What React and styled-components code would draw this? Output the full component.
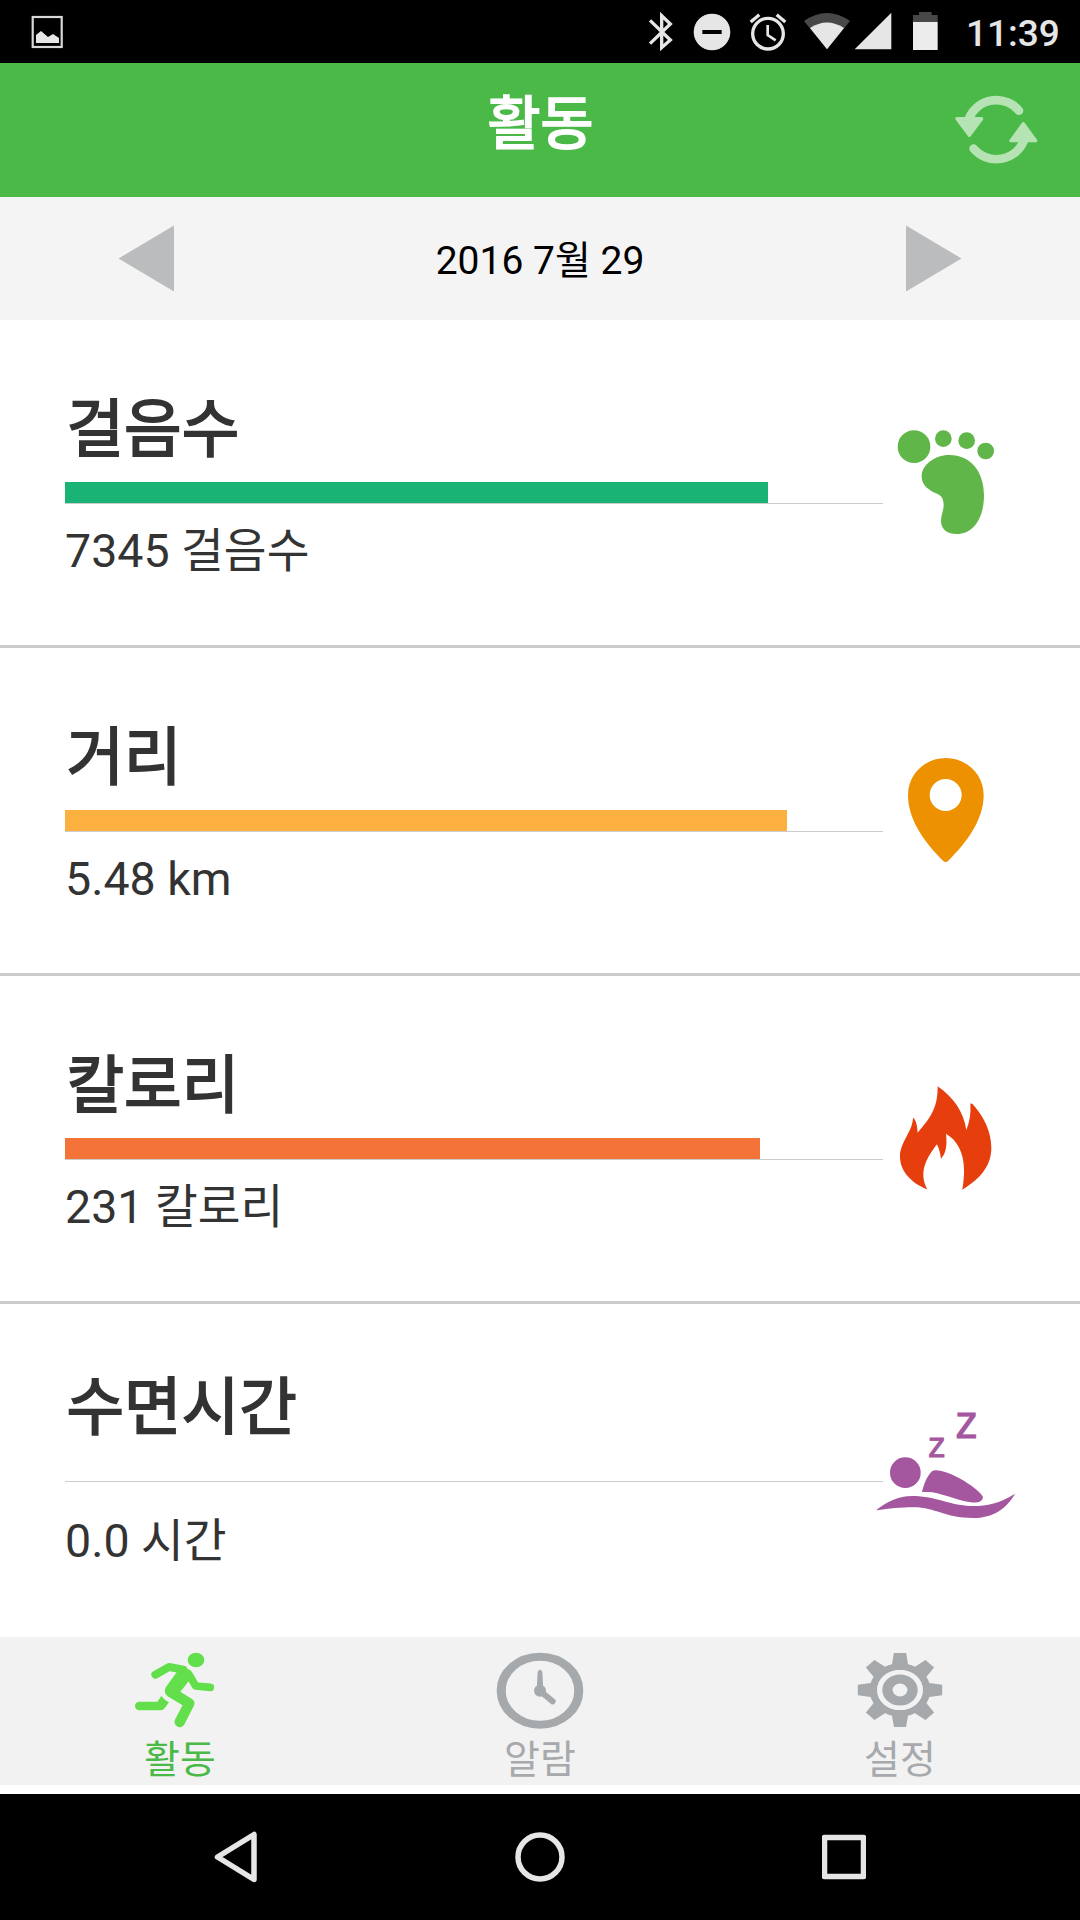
import styled, { createGlobalStyle } from "styled-components";

const activities = [
    { name: "걸음수", value: "7345 걸음수", percent: 85.94, color: "#19b475", Icon: FootIcon },
    { name: "거리", value: "5.48 km", percent: 88.26, color: "#fbb040", Icon: PinIcon },
    { name: "칼로리", value: "231 칼로리", percent: 84.96, color: "#f37338", Icon: FireIcon },
    { name: "수면시간", value: "0.0 시간", percent: 0, color: "#a4579f", Icon: SleepIcon },
];

const tabs = [
    { name: "활동", Icon: RunIcon, active: true },
    { name: "알람", Icon: ClockIcon },
    { name: "설정", Icon: GearIcon },
];

function FootIcon() {
    return (
        <svg viewBox="48 690 420 312" fill="#60b648">
            <circle cx="162" cy="740" r="49" />
            <circle cx="250" cy="716" r="25" />
            <circle cx="320" cy="722" r="25" />
            <circle cx="377" cy="753" r="25" />
            <path d="M268 765C332 765 372 815 372 885C372 955 340 1002 291 1002C262 1002 243 988 243 962C243 945 251 932 251 915C251 900 247 890 237 884C215 874 185 862 185 828C185 797 222 765 268 765Z" />
        </svg>
    );
}

function PinIcon() {
    return (
        <svg viewBox="48 114 420 312" fill="#ee9100">
            <path
                fillRule="evenodd"
                d="M257 114C320 114 371 163 371 225C371 300 320 367 265 422Q257 430 249 422C194 367 144 300 144 225C144 163 195 114 257 114ZM257 177A48 48 0 1 0 257 273A48 48 0 1 0 257 177Z"
            />
        </svg>
    );
}

function FireIcon() {
    return (
        <svg viewBox="48 78 420 312" fill="#e63e0d">
            <path d="M233 79C280 112 311 155 319 210C329 185 333 160 331 131C337 129 341 136 346 142C372 174 394 215 394 264C394 325 350 363 307 389C314 350 325 260 258 221C262 255 258 280 243 296C241 280 237 266 231 253C203 290 173 335 202 388C165 374 120 340 120 290C120 245 158 215 159 173C169 180 172 198 173 218C210 175 234 145 233 79Z" />
        </svg>
    );
}

function SleepIcon() {
    return (
        <svg viewBox="108 72 420 312" fill="#a4579f">
            <circle cx="196" cy="248" r="46" />
            <path d="M246 306C252 280 262 258 276 244C300 228 400 280 429 320C428 335 412 340 392 337C345 330 300 306 262 306Z" />
            <path d="M108 361C140 335 175 318 217 318C290 318 330 348 400 348C440 348 480 340 525 311C500 355 460 384 400 384C310 384 290 352 220 352C180 352 150 356 108 361Z" />
            <SleepLetter x="264" y="202" fontSize="106">z</SleepLetter>
            <SleepLetter x="346" y="145" fontSize="136">z</SleepLetter>
        </svg>
    );
}

function RunIcon() {
    return (
        <svg viewBox="102 66 276 234" fill="#64df4c">
            <ellipse cx="288" cy="90" rx="25" ry="22" />
            <g fill="none" stroke="#64df4c" strokeLinecap="round" strokeLinejoin="round">
                <path d="M166 134L207 111L250 119" strokeWidth="24" />
                <path d="M266 132L287 168L331 172" strokeWidth="23" />
                <path d="M212 186L268 220L239 276" strokeWidth="31" />
            </g>
            <path d="M232 124C260 100 285 128 275 144L266 154L240 187L210 200C192 192 192 182 198 171Z" />
            <path d="M118 215H172L184 198Q193 210 207 217L195 233Q190 241 181 241H118A13 13 0 0 1 118 215Z" />
        </svg>
    );
}

function ClockIcon() {
    return (
        <svg viewBox="102 66 276 234">
            <g transform="translate(240 182) scale(1.14 1)" fill="none" stroke="#a5a9ac" strokeLinecap="round">
                <circle r="102" strokeWidth="24" />
            </g>
            <circle cx="240" cy="182" r="18" fill="#a5a9ac" />
            <path d="M233 126Q240 113 247 126L250 182H230Z" fill="#a5a9ac" />
            <path d="M244 186L278 214" stroke="#a5a9ac" strokeWidth="18" strokeLinecap="round" />
        </svg>
    );
}

function GearIcon() {
    return (
        <svg viewBox="102 66 276 234">
            <g transform="translate(240 180) scale(1.14 1)" fill="#a5a9ac">
                {[0, 45, 90, 135, 180, 225, 270, 315].map((deg) => (
                    <path key={deg} d="M-22 -72L-16 -111H16L22 -72Z" transform={`rotate(${deg})`} />
                ))}
                <circle r="70" fill="none" stroke="#a5a9ac" strokeWidth="20" />
                <circle r="60" fill="#f2f2f2" />
                <circle r="33" fill="none" stroke="#a5a9ac" strokeWidth="27" />
            </g>
        </svg>
    );
}

const StatusBar = () => (
    <StatusContainer>
        <svg width="33" height="34" viewBox="0 0 33 34">
            <rect x="1.7" y="2" width="29" height="30" fill="none" stroke="#d8d8d6" strokeWidth="2.2" />
            <path d="M5 28V20L10 16L17 22L22 19L28 23V28Z" fill="#e6e6e6" />
        </svg>
        <StatusIcons>
            <StatusIcon $width={27} viewBox="84 30 81 129">
                <path d="M90 61L151 120L125 143V47L151 72L90 131" fill="none" stroke="#e6e6e6" strokeWidth="10" />
            </StatusIcon>
            <StatusIcon $width={39} $space={18} viewBox="219 30 117 129">
                <circle cx="276" cy="96" r="55" fill="#e6e6e6" />
                <path d="M247 96H305" stroke="#000" strokeWidth="12" />
            </StatusIcon>
            <StatusIcon $width={39} $space={16} viewBox="384 30 117 129">
                <g fill="none" stroke="#e6e6e6">
                    <circle cx="444" cy="101" r="46" strokeWidth="10" />
                    <path d="M443 75V105L467 121" strokeWidth="8" />
                    <path d="M392 66L418 44M496 66L470 44" strokeWidth="10" />
                </g>
            </StatusIcon>
            <StatusIcon $width={48} $space={16} viewBox="549 30 144 129">
                <path d="M552 63Q621 15 690 63L621 148Z" fill="#484848" />
                <path d="M570 84Q621 51 672 84L621 148Z" fill="#e6e6e6" />
            </StatusIcon>
            <StatusIcon $width={39} $space={3} viewBox="702 30 117 129">
                <path d="M704 148L814 38V148Z" fill="#e6e6e6" />
            </StatusIcon>
            <StatusIcon $width={27} $space={19} viewBox="876 30 81 129">
                <path d="M879 66V45H897V36H935V45H953V66Z" fill="#484848" />
                <path d="M879 66H953V150H879Z" fill="#ececec" />
            </StatusIcon>
            <StatusTime>11:39</StatusTime>
        </StatusIcons>
    </StatusContainer>
);

const ActivityItem = ({ data }) => {
    const { name, value, percent, color, Icon } = data;
    return (
        <ActivityRow>
            <ActivityInfo $empty={percent === 0}>
                <h2>{name}</h2>
                <Progress>
                    {percent > 0 && (
                        <ProgressFill style={{ width: `${percent}%` }} $color={color} />
                    )}
                </Progress>
                <p>{value}</p>
            </ActivityInfo>
            <ActivityIcon>
                <Icon />
            </ActivityIcon>
        </ActivityRow>
    );
};

const App = () => {
    return (
        <>
            <GlobalStyle />
            <Screen>
                <StatusBar />
                <Header>
                    <h1>활동</h1>
                    <SyncButton aria-label="sync">
                        <svg width="83" height="69" viewBox="1005 285 249 207">
                            <g fill="none" stroke="#b5e3b3" strokeWidth="26" strokeLinecap="round">
                                <path d="M1197 332A89 89 0 0 0 1046 357" />
                                <path d="M1061 446A89 89 0 0 0 1212 421" />
                            </g>
                            <g fill="#b5e3b3" stroke="#b5e3b3" strokeWidth="10" strokeLinejoin="round">
                                <path d="M1011 356H1085L1048 406Z" />
                                <path d="M1173 422H1247L1210 371Z" />
                            </g>
                        </svg>
                    </SyncButton>
                </Header>
                <DateBar>
                    <DateButton aria-label="prev">
                        <svg width="56" height="67" viewBox="0 0 56 67">
                            <path d="M0.5 33.5L56 0.5V66.5Z" fill="#bbbcbe" />
                        </svg>
                    </DateButton>
                    <span>2016 7월 29</span>
                    <DateButton aria-label="next">
                        <svg width="56" height="67" viewBox="0 0 56 67">
                            <path d="M55.5 33.5L0 0.5V66.5Z" fill="#bbbcbe" />
                        </svg>
                    </DateButton>
                </DateBar>
                <ActivityList>
                    {activities.map((item) => (
                        <ActivityItem data={item} key={item.name} />
                    ))}
                </ActivityList>
                <TabBar>
                    {tabs.map(({ name, Icon, active }) => (
                        <TabItem key={name} $active={active}>
                            <Icon />
                            <span>{name}</span>
                        </TabItem>
                    ))}
                </TabBar>
                <NavBar>
                    <svg width="44" height="52" viewBox="0 0 44 52">
                        <path d="M3.5 26L40 3.5V48.5Z" />
                    </svg>
                    <svg width="52" height="52" viewBox="0 0 52 52">
                        <circle cx="26" cy="26" r="22" />
                    </svg>
                    <svg width="44" height="52" viewBox="0 0 44 52">
                        <rect x="2.5" y="6.5" width="39" height="39" />
                    </svg>
                </NavBar>
            </Screen>
        </>
    );
};

export default App;

const GlobalStyle = createGlobalStyle`
    * {
        box-sizing: border-box;
    }
    body {
        margin: 0;
        background: #fff;
        font-family: Roboto, "Noto Sans CJK KR", sans-serif;
    }
    h1, h2, p {
        margin: 0;
    }
    button {
        margin: 0;
        padding: 0;
        border: 0;
        background: none;
    }
    svg {
        display: block;
        flex-shrink: 0;
    }
`;

const Screen = styled.div`
    display: flex;
    flex-direction: column;
    width: 1080px;
    height: 1920px;
    overflow: hidden;
    background: #fff;
`;

const StatusContainer = styled.div`
    display: flex;
    justify-content: space-between;
    align-items: center;
    height: 63px;
    padding: 0 21px 0 31px;
    background: #000;
`;

const StatusIcons = styled.div`
    display: flex;
    align-items: center;
`;

const StatusIcon = styled.svg`
    width: ${({ $width }) => $width}px;
    height: 43px;
    margin-left: ${({ $space }) => $space || 0}px;
`;

const StatusTime = styled.span`
    width: 93px;
    margin-left: 27px;
    padding-top: 4px;
    font-size: 37px;
    font-weight: 500;
    line-height: 44px;
    color: #e6e6e6;
    white-space: nowrap;
`;

const Header = styled.header`
    display: grid;
    grid-template-columns: 1fr auto 1fr;
    height: 134px;
    background: #4ab948;
    & h1 {
        grid-column: 2;
        padding: 24px 0 0 1px;
        font-size: 57.5px;
        font-weight: 400;
        line-height: 76px;
        color: #fff;
        -webkit-text-stroke: 2px #fff;
    }
`;

const SyncButton = styled.button`
    justify-self: end;
    align-self: start;
    margin: 32px 42px 0 0;
`;

const DateBar = styled.div`
    display: flex;
    align-items: center;
    justify-content: space-between;
    height: 123px;
    padding: 0 118px;
    background: #f4f4f4;
    & span {
        padding-top: 4px;
        font-size: 39px;
        line-height: 56px;
        color: #000;
    }
`;

const DateButton = styled.button`
    width: 56px;
    height: 67px;
`;

const ActivityList = styled.main`
    height: 1317px;
`;

const ActivityRow = styled.section`
    display: flex;
    height: 328px;
    padding-left: 65px;
    border-bottom: 3px solid #cbcbcb;
    &:last-child {
        height: 333px;
        border-bottom: 0;
    }
`;

const ActivityInfo = styled.div`
    width: 818px;
    padding-top: ${({ $empty }) => ($empty ? 59 : 65)}px;
    color: #333;
    & h2 {
        height: 97px;
        padding-left: 1.5px;
        font-size: 62.6px;
        font-weight: 400;
        line-height: 90px;
        -webkit-text-stroke: 1.8px #333;
    }
    & p {
        padding-top: ${({ $empty }) => ($empty ? 25 : 13)}px;
        font-size: 46.5px;
        line-height: 68px;
    }
`;

const Progress = styled.div`
    height: 22px;
    border-bottom: 1px solid #ccc;
`;

const ProgressFill = styled.div`
    height: 21px;
    background: ${({ $color }) => $color};
`;

const ActivityIcon = styled.div`
    margin: 110px 0 0 -7px;
    & svg {
        width: 140px;
        height: 104px;
        overflow: visible;
    }
`;

const SleepLetter = styled.text`
    font-family: "Liberation Sans", sans-serif;
    stroke: #a4579f;
    stroke-width: 2.5px;
`;

const TabBar = styled.nav`
    display: grid;
    grid-template-columns: repeat(3, 1fr);
    height: 148px;
    margin-bottom: 9px;
    background: #f2f2f2;
`;

const TabItem = styled.div`
    display: flex;
    flex-direction: column;
    align-items: center;
    padding-top: 15px;
    font-size: 39px;
    line-height: 56px;
    color: ${({ $active }) => ($active ? "#4ab948" : "#a7a9ac")};
    & svg {
        width: 92px;
        height: 78px;
        margin-bottom: 2px;
    }
`;

const NavBar = styled.footer`
    display: flex;
    align-items: center;
    justify-content: space-between;
    height: 126px;
    padding: 0 214px;
    background: #000;
    & svg {
        fill: none;
        stroke: #e6e6e6;
        stroke-width: 5.5;
        stroke-linejoin: round;
    }
`;
